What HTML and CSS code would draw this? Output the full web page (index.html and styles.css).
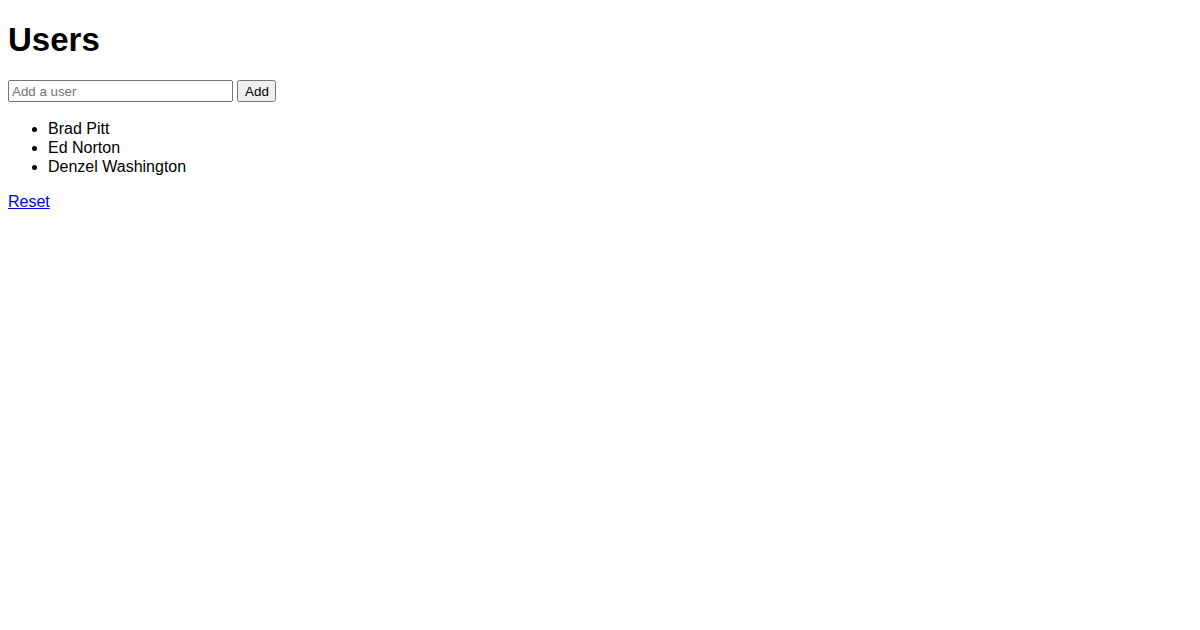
FILE: index.html
```html
<!DOCTYPE html>
<html>
<head>
<meta charset="utf-8">
<title>Users</title>
<link rel="stylesheet" href="styles.css">
</head>
<body>
<h1 class="title">Users</h1>
<form class="add-form">
<input class="add-input" type="text" placeholder="Add a user"> <button class="add-button" type="button">Add</button>
</form>
<ul class="user-list">
<li>Brad Pitt</li>
<li>Ed Norton</li>
<li>Denzel Washington</li>
</ul>
<p class="reset"><a class="reset-link" href="#">Reset</a></p>
</body>
</html>
```

FILE: styles.css
```css
body {
  margin: 0 8px 8px 8px;
  font-family: "Liberation Sans", Arial, sans-serif;
}
.title {
  font-size: 33px;
  line-height: 38px;
  margin: 21px 0 21px 0;
}
.add-form {
  margin: 0;
}
.add-input,
.add-button {
  font-family: "Liberation Sans", Arial, sans-serif;
  font-size: 13.333px;
  height: 22px;
  box-sizing: border-box;
  vertical-align: top;
}
.add-input {
  width: 225px;
}
.add-button {
  width: 39px;
  padding: 0;
}
.user-list {
  margin: 17px 0 16px 0;
  line-height: 19px;
}
.reset {
  line-height: 19px;
}
.reset-link {
  color: #0000ee;
}
```
